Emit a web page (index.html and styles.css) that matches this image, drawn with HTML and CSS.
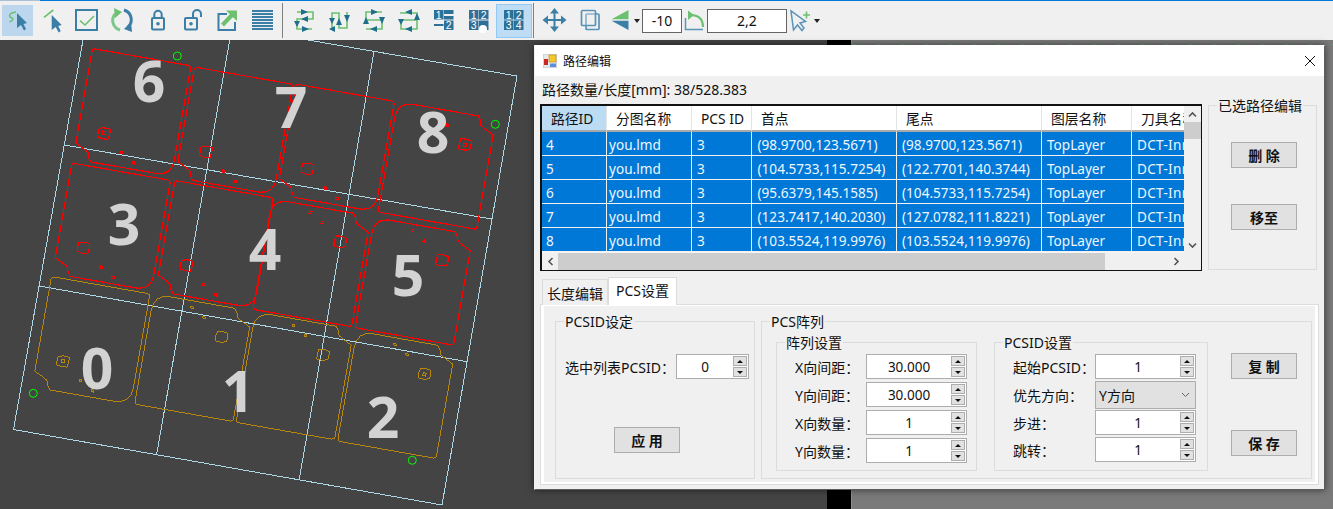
FILE: index.html
```html
<!DOCTYPE html>
<html lang="zh">
<head>
<meta charset="utf-8">
<title>路径编辑</title>
<link rel="stylesheet" href="styles.css">
</head>
<body>
<div class="topline"></div>
<div class="toolbar">
  <div class="tool"><svg class="ico selbg" viewBox="0 0 31 31"><path class="gl" d="M14,7Q6,8 8,12Q14,14 7.5,17"/><polygon class="bf" points="15,8 15,23 19,20 22,25.5 24,24 21.5,19 25,18"/></svg></div>
  <div class="tool"><svg class="ico" viewBox="0 0 31 31"><path class="gt" d="M7,12.3L16.3,5"/><polygon class="bf" points="14.7,10 14.7,25 18.7,22 21.7,27.5 23.7,26 21.2,21 24.7,20"/></svg></div>
  <div class="tool"><svg class="ico" viewBox="0 0 31 31"><rect class="bl" x="4" y="5" width="21" height="20"/><path class="gt" d="M8,15.7L13,20L22,11"/></svg></div>
  <div class="tool"><svg class="ico" viewBox="0 0 31 31"><path class="gk" d="M13,25A10,10 0 0 1 8,9"/><polygon class="gf" points="7,3 15,7 8,13"/><path class="bk" d="M17,5A10,10 0 0 1 21,22"/><polygon class="bf" points="25,27 17,24 24,17"/></svg></div>
  <div class="tool"><svg class="ico" viewBox="0 0 31 31"><rect class="bl" x="10" y="13" width="12" height="11.5" rx="1"/><circle class="bf" cx="16" cy="18.7" r="1.8"/><path class="bl" d="M12.3,13V9.5a3.7,3.7 0 0 1 7.4,0V13"/></svg></div>
  <div class="tool"><svg class="ico" viewBox="0 0 31 31"><rect class="bl" x="8" y="13" width="12" height="11.5" rx="1"/><circle class="bf" cx="14" cy="18.7" r="1.8"/><path class="bl" d="M16,13V9a4,4 0 0 1 8,0V12"/></svg></div>
  <div class="tool"><svg class="ico" viewBox="0 0 31 31"><path class="bl" d="M15,9H6.500V25H23V17"/><path class="gk2" d="M10.500,20L20,10"/><polygon class="gf" points="14,5.500 25,5.500 25,16"/></svg></div>
  <div class="tool"><svg class="ico" viewBox="0 0 31 31"><path class="bstack" d="M5,6H26M5,9H26M5,12H26M5,15H26M5,18H26M5,21H26M5,24H26"/></svg></div>
  <div class="sep"></div>
  <div class="tool"><svg class="ico" viewBox="0 0 31 31"><path class="gt" d="M9,7H25V14H9V24H24"/><polygon class="tf" points="13,4 20,7 13,10"/><polygon class="tf" points="20,11 13,14 20,17"/><polygon class="tf" points="6,16 12,16 9,22"/><polygon class="tf" points="14,21 21,24 14,27"/></svg></div>
  <div class="tool"><svg class="ico" viewBox="0 0 31 31"><path class="gt" d="M9,24V8H16V23H24V7"/><polygon class="tf" points="6,13 12,13 9,19"/><polygon class="tf" points="13,20 19,20 16,13"/><polygon class="tf" points="21,10 27,10 24,17"/><polygon class="tf" points="6,24 12,21 12,27"/></svg></div>
  <div class="tool"><svg class="ico" viewBox="0 0 31 31"><path class="gt" d="M24,7H8V15H24V24H8"/><polygon class="tf" points="13,4 20,7 13,10"/><polygon class="tf" points="5,19 11,19 8,12"/><polygon class="tf" points="21,12 27,12 24,19"/><polygon class="tf" points="19,21 12,24 19,27"/></svg></div>
  <div class="tool"><svg class="ico" viewBox="0 0 31 31"><path class="gt" d="M7,8H24V24H8V15H24"/><polygon class="tf" points="19,4 12,7 19,10"/><polygon class="tf" points="21,15 27,15 24,8"/><polygon class="tf" points="5,14 11,14 8,20"/><polygon class="tf" points="19,21 12,24 19,27"/></svg></div>
  <div class="tool"><svg class="ico" viewBox="0 0 31 31"><rect class="nb" x="6" y="5" width="9.500" height="9.500"/><text class="nt" x="10.700" y="13.500">1</text><rect class="nb" x="16" y="5" width="9.500" height="4"/><rect class="nb" x="16" y="11" width="9.500" height="3.500"/><rect class="nb" x="16" y="15.500" width="9.500" height="9.500"/><text class="nt" x="20.700" y="24">2</text><rect class="nb" x="6" y="19" width="9.500" height="2"/></svg></div>
  <div class="tool"><svg class="ico" viewBox="0 0 31 31"><rect class="nb" x="6" y="5" width="9.500" height="9.500"/><text class="nt" x="10.700" y="13.500">1</text><rect class="nb" x="16" y="5" width="9.500" height="9.500"/><text class="nt" x="20.700" y="13.500">2</text><rect class="nb" x="6" y="15.500" width="9.500" height="9.500"/><text class="nt" x="10.700" y="24">3</text><rect class="nb" x="16" y="15.500" width="9.500" height="9.500"/><circle class="wf" cx="20" cy="24" r="4"/></svg></div>
  <div class="tool active"><svg class="ico" viewBox="0 0 31 31"><rect class="nb" x="6" y="5" width="9.500" height="9.500"/><text class="nt" x="10.700" y="13.500">1</text><rect class="nb" x="16" y="5" width="9.500" height="9.500"/><text class="nt" x="20.700" y="13.500">2</text><rect class="nb" x="6" y="15.500" width="9.500" height="9.500"/><text class="nt" x="10.700" y="24">3</text><rect class="nb" x="16" y="15.500" width="9.500" height="9.500"/><text class="nt" x="20.700" y="24">4</text></svg></div>
  <div class="sep sep-b"></div>
  <div class="tool"><svg class="ico" viewBox="0 0 31 31"><path class="bl" d="M5,15H26M15.500,5V25"/><polygon class="bf" points="15.500,3 20,8.500 11,8.500"/><polygon class="bf" points="15.500,27 20,21.500 11,21.500"/><polygon class="bf" points="3.500,15 9,10.500 9,19.500"/><polygon class="bf" points="27.500,15 22,10.500 22,19.500"/></svg></div>
  <div class="tool"><svg class="ico" viewBox="0 0 31 31"><rect class="lb" x="12" y="9" width="13" height="15.500" rx="1"/><rect class="lb" x="7.500" y="5.500" width="14" height="15" rx="1"/></svg></div>
  <div class="tool tool-tri"><svg class="ico-tri" viewBox="0 0 27 31"><polygon class="gf" points="4.500,14.300 21.500,5 21.500,14.300"/><polygon class="bf" points="4.500,15.700 21.500,15.700 21.500,25"/></svg></div>
  <div class="drop drop-a"></div>
  <div class="tbinput w40">-10</div>
  <div class="tool tool-undo"><svg class="ico-undo" viewBox="0 0 25 31"><path class="lb0" d="M3.500,13V24.500H21"/><path class="gt2" d="M21,22C21,13 16,10 8,10"/><polygon class="gf" points="6,5.500 6,15 12,10"/></svg></div>
  <div class="tbinput w80">2,2</div>
  <div class="tool tool-cur"><svg class="ico-cur" viewBox="0 0 24 31"><polygon class="lb0" points="4,6 6.500,25 10.500,20 15,25.500 17,23 13,18 18.500,16.500"/><path class="gt" d="M16,10H23M19.500,6.500V13.500"/></svg></div>
  <div class="drop"></div>
</div>

<div class="workspace">
  <svg class="canvas" viewBox="0 40 827 469" aria-label="PCS layout">
    <defs>
      <g id="shape">
        <path d="M0,3Q0,0 3,0H97Q100,0 100,3V95Q100,112 83,112H18L15,108L13.500,103L8,100L0,96Z"/>
        <path d="M20.500,77.500Q26,75 31.500,76.500Q32.500,81 31,86.500Q26,88 20.500,86Q19.500,81 20.500,77.500Z"/>
        <rect x="45.500" y="96.500" width="2.500" height="2"/>
        <rect x="59" y="104.500" width="2.500" height="2"/>
      </g>
      <g id="mark"><rect x="24.500" y="79.500" width="3" height="3"/></g>
    </defs>
    <g class="grid">
      <path d="M308,40L517,76L442,505L13.500,429.500L83,40"/>
      <path d="M229.700,40L156.700,454M374,51.700L299.300,479"/>
      <path d="M64.300,145L491.700,219M39.300,286L467.300,361.700"/>
    </g>
    <g class="red">
      <use href="#shape" transform="translate(92.500,48.500) rotate(10)"/>
      <use href="#mark" transform="translate(92.500,48.500) rotate(10)"/>
      <use href="#shape" transform="translate(194.500,67) rotate(10)"/>
      <use href="#shape" transform="translate(296,84) rotate(10)"/>
      <use href="#shape" transform="translate(397.500,101.700) rotate(10) rotate(180 50 56)"/>
      <use href="#mark" transform="translate(397.500,101.700) rotate(10) rotate(180 50 56)"/>
      <use href="#shape" transform="translate(72,163) rotate(10)"/>
      <use href="#shape" transform="translate(175,180.500) rotate(10)"/>
      <use href="#shape" transform="translate(272.500,199) rotate(10) rotate(180 50 56)"/>
      <use href="#shape" transform="translate(374.500,217.500) rotate(10) rotate(180 50 56)"/>
    </g>
    <g class="amber">
      <use href="#shape" transform="translate(51.500,276.500) rotate(10)"/>
      <use href="#mark" transform="translate(51.500,276.500) rotate(10)"/>
      <use href="#shape" transform="translate(154,294) rotate(10) rotate(180 50 56)"/>
      <use href="#shape" transform="translate(255.500,312) rotate(10) rotate(180 50 56)"/>
      <use href="#shape" transform="translate(357,331) rotate(10) rotate(180 50 56)"/>
      <use href="#mark" transform="translate(357,331) rotate(10) rotate(180 50 56)"/>
    </g>
    <g class="fid">
      <circle cx="177.300" cy="56" r="4"/>
      <circle cx="495.300" cy="124.300" r="4"/>
      <circle cx="33.300" cy="393.300" r="4"/>
      <circle cx="412.300" cy="460.300" r="4"/>
    </g>
    <g class="nums">
      <text x="149" y="101.700">6</text>
      <text x="291" y="127.500">7</text>
      <text x="433" y="153">8</text>
      <text x="124" y="245">3</text>
      <text x="265" y="270">4</text>
      <text x="408" y="296">5</text>
      <text x="97" y="389">0</text>
      <text x="238" y="412">1</text>
      <text x="383" y="437.700">2</text>
    </g>
  </svg>
  <div class="band"></div>
  <div class="side"><div class="traces"></div></div>
</div>

<div class="dialog">
  <div class="titlebar">
    <svg class="appicon" viewBox="0 0 14 14"><rect x="0" y="0" width="14" height="14" fill="#e8e8e8" stroke="#a8a8a8" stroke-width=".6"/><rect x="6" y="1" width="7" height="7" fill="#f6c62e" stroke="#b88a10" stroke-width=".6"/><rect x="1" y="5" width="4" height="6" fill="#c62a20"/><rect x="7" y="9.500" width="6" height="3.500" fill="#5a90e0"/></svg>
    <span class="title">路径编辑</span>
    <svg class="close" viewBox="0 0 10 10"><path d="M0,0L10,10M10,0L0,10"/></svg>
  </div>
  <div class="body">
    <div class="count">路径数量/长度[mm]: 38/528.383</div>
    <div class="top-row">
      <div class="gridframe">
        <div class="tablewrap">
          <table class="paths">
            <colgroup><col class="c1"><col class="c2"><col class="c3"><col class="c4"><col class="c5"><col class="c6"><col class="c7"></colgroup>
            <thead><tr><th class="hot">路径ID</th><th>分图名称</th><th>PCS ID</th><th>首点</th><th>尾点</th><th>图层名称</th><th>刀具名称</th></tr></thead>
            <tbody>
              <tr><td class="first">4</td><td class="second">you.lmd</td><td>3</td><td class="pt4">(98.9700,123.5671)</td><td>(98.9700,123.5671)</td><td>TopLayer</td><td class="tool-name">DCT-Inner</td></tr>
              <tr><td class="first">5</td><td class="second">you.lmd</td><td>3</td><td class="pt4">(104.5733,115.7254)</td><td>(122.7701,140.3744)</td><td>TopLayer</td><td class="tool-name">DCT-Inner</td></tr>
              <tr><td class="first">6</td><td class="second">you.lmd</td><td>3</td><td class="pt4">(95.6379,145.1585)</td><td>(104.5733,115.7254)</td><td>TopLayer</td><td class="tool-name">DCT-Inner</td></tr>
              <tr><td class="first">7</td><td class="second">you.lmd</td><td>3</td><td class="pt4">(123.7417,140.2030)</td><td>(127.0782,111.8221)</td><td>TopLayer</td><td class="tool-name">DCT-Inner</td></tr>
              <tr><td class="first">8</td><td class="second">you.lmd</td><td>3</td><td class="pt4">(103.5524,119.9976)</td><td>(103.5524,119.9976)</td><td>TopLayer</td><td class="tool-name">DCT-Inner</td></tr>
            </tbody>
          </table>
        </div>
        <div class="vbar">
          <div class="sb-btn"><svg viewBox="0 0 9 6"><path d="M1,5L4.500,1.500L8,5"/></svg></div>
          <div class="vthumb"></div>
          <div class="sb-fill"></div>
          <div class="sb-btn"><svg viewBox="0 0 9 6"><path d="M1,1L4.500,4.500L8,1"/></svg></div>
        </div>
        <div class="hbar">
          <div class="sb-btn"><svg viewBox="0 0 6 9"><path d="M5,1L1.500,4.500L5,8"/></svg></div>
          <div class="hthumb"></div>
          <div class="sb-fill"></div>
          <div class="sb-btn"><svg viewBox="0 0 6 9"><path d="M1,1L4.500,4.500L1,8"/></svg></div>
        </div>
        <div class="corner"></div>
      </div>
      <div class="group side-group">
        <div class="legend">已选路径编辑</div>
        <div class="btn side-btn">删 除</div>
        <div class="btn side-btn gap36">移至</div>
      </div>
    </div>
    <div class="tabs">
      <div class="tab">长度编辑</div>
      <div class="tab on">PCS设置</div>
    </div>
    <div class="tabpanel">
      <div class="panel-inner">
        <div class="group g-set">
          <div class="legend">PCSID设定</div>
          <div class="set-row"><span class="set-label">选中列表PCSID：</span>
            <div class="spin s73"><span class="val">0</span><span class="arrows"><i class="up"></i><i class="down"></i></span></div>
          </div>
          <div class="btn apply">应 用</div>
        </div>
        <div class="group g-arr">
          <div class="legend">PCS阵列</div>
          <div class="arr-row">
            <div class="group sub sub-a">
              <div class="legend">阵列设置</div>
              <div class="form form-a">
                <span>X向间距：</span><div class="spin"><span class="val">30.000</span><span class="arrows"><i class="up"></i><i class="down"></i></span></div>
                <span>Y向间距：</span><div class="spin"><span class="val">30.000</span><span class="arrows"><i class="up"></i><i class="down"></i></span></div>
                <span>X向数量：</span><div class="spin"><span class="val">1</span><span class="arrows"><i class="up"></i><i class="down"></i></span></div>
                <span>Y向数量：</span><div class="spin"><span class="val">1</span><span class="arrows"><i class="up"></i><i class="down"></i></span></div>
              </div>
            </div>
            <div class="group sub sub-b">
              <div class="legend">PCSID设置</div>
              <div class="form form-b">
                <span>起始PCSID：</span><div class="spin"><span class="val">1</span><span class="arrows"><i class="up"></i><i class="down"></i></span></div>
                <span>优先方向：</span><div class="select"><span>Y方向</span><svg viewBox="0 0 9 6"><path d="M1,1L4.500,4.500L8,1"/></svg></div>
                <span>步进：</span><div class="spin"><span class="val">1</span><span class="arrows"><i class="up"></i><i class="down"></i></span></div>
                <span>跳转：</span><div class="spin"><span class="val">1</span><span class="arrows"><i class="up"></i><i class="down"></i></span></div>
              </div>
            </div>
            <div class="action-col">
              <div class="btn">复 制</div>
              <div class="btn">保 存</div>
            </div>
          </div>
        </div>
      </div>
    </div>
  </div>
</div>
</body>
</html>
```

FILE: styles.css
```css
* { box-sizing: border-box; }
html, body { margin: 0; padding: 0; }
body {
  width: 1333px;
  height: 509px;
  overflow: hidden;
  position: relative;
  background: #444;
  font-family: "Noto Sans", "Noto Sans CJK SC", sans-serif;
  font-size: 14px;
  color: #111;
}

/* toolbar */
.topline { height: 1px; background: linear-gradient(to right, #a9bfd6 0 40px, #0078d7 40px); }
.toolbar { height: 39px; background: #f0f0f0; display: flex; align-items: center; }
.tool { width: 35px; height: 34px; flex: none; display: flex; align-items: center; justify-content: center; }
.ico { width: 31px; height: 31px; flex: none; }
.selbg { background: #bcd6ee; }
.tool.active { width: 36.5px; background: #bfdcf5; border: 1px solid #90c8f6; }
.sep { width: 1px; height: 35px; background: #808080; margin: 0 2.5px 0 2px; flex: none; }
.sep-b { margin-left: 1px; }
.tool-tri { width: 27px; }
.ico-tri { width: 27px; height: 31px; flex: none; }
.tool-undo { width: 25px; }
.ico-undo { width: 25px; height: 31px; flex: none; }
.tool-cur { width: 24px; }
.ico-cur { width: 24px; height: 31px; flex: none; }
.drop { width: 0; height: 0; border-left: 3.5px solid transparent; border-right: 3.5px solid transparent; border-top: 4px solid #222; margin: 0 3px; flex: none; }
.drop-a { margin: 0 2.5px 0 0; }
.tbinput {
  height: 24px; background: #fff; border: 1px solid #646464; flex: none;
  display: flex; align-items: center; justify-content: center; font-size: 14px; color: #111;
}
.w40 { width: 40px; }
.w80 { width: 80px; }

/* toolbar icon paints */
.gl, .gt { fill: none; stroke: #6cc070; stroke-width: 1.6; }
.gt2 { fill: none; stroke: #6cc070; stroke-width: 2.2; }
.gk { fill: none; stroke: #7cc88a; stroke-width: 3; }
.gk2 { fill: none; stroke: #6cc070; stroke-width: 4; }
.gf { fill: #6cc070; }
.bf { fill: #3b7ea6; }
.bl { fill: none; stroke: #3b7ea6; stroke-width: 2; }
.bk { fill: none; stroke: #3b7ea6; stroke-width: 3; }
.bstack { fill: none; stroke: #3b7ea6; stroke-width: 1.8; }
.tf { fill: #1d6f8c; }
.lb { fill: #f0f0f0; fill-opacity: .35; stroke: #5a93b8; stroke-width: 1.7; }
.lb0 { fill: none; stroke: #5a93b8; stroke-width: 1.5; }
.nb { fill: #2e7198; }
.nt { fill: #fff; font-family: "Liberation Sans", sans-serif; font-size: 10.5px; text-anchor: middle; }
.wf { fill: #fff; }

/* workspace */
.workspace { height: 469px; display: flex; }
.canvas { width: 827px; height: 469px; flex: none; background: #444; display: block; }
.band { width: 24px; background: #000; flex: none; }
.side { flex: 1; background: #7a7a7a; border-left: 1px solid #c8862a; }
.traces { height: 1px; margin-top: 4px; background: repeating-linear-gradient(to right, #6f9a6f 0 5px, transparent 5px 24px); }

.grid path { fill: none; stroke: #add8e6; stroke-width: 1; shape-rendering: crispEdges; }
.red { fill: none; stroke: #f00; stroke-width: 1.2; shape-rendering: crispEdges; }
.amber { fill: none; stroke: #b8860b; stroke-width: 1; shape-rendering: crispEdges; }
.fid circle { fill: none; stroke: #0f0; stroke-width: 1; }
.nums text { fill: #d3d3d3; font-family: "Open Sans", sans-serif; font-weight: 700; font-size: 57px; text-anchor: middle; }

/* dialog window */
.dialog {
  position: absolute; left: 534px; top: 45px; width: 791px; height: 445px;
  border: 1px solid #5c5c5c; border-top-color: #fff; border-left-color: #f0f0f0; background: #f0f0f0;
  box-shadow: 0 0 7px rgba(0,0,0,.55);
  display: flex; flex-direction: column;
}
.titlebar { height: 30px; flex: none; background: #fff; display: flex; align-items: center; padding: 0 9px 0 8px; }
.appicon { width: 14px; height: 14px; flex: none; margin-right: 6px; }
.title { font-size: 12px; flex: 1; }
.close { width: 10px; height: 10px; flex: none; }
.close path { fill: none; stroke: #111; stroke-width: 1; }
.body { flex: 1; }
.count { height: 28px; padding-left: 7px; line-height: 28px; white-space: nowrap; }
.top-row { display: flex; padding-left: 5px; }

/* data grid */
.gridframe {
  width: 662px; height: 167px; flex: none; background: #f0f0f0;
  border-style: solid; border-color: #111; border-width: 2px 1px 1px 2px;
  display: grid; grid-template-columns: 642px 17px; grid-template-rows: 147px 17px;
}
.tablewrap { overflow: hidden; background: #f6f6f6; }
.paths { border-collapse: separate; border-spacing: 0; table-layout: fixed; width: 720px; font-size: 13.6px; }
.c1 { width: 65px; } .c2 { width: 85px; } .c3 { width: 60px; } .c4 { width: 145px; } .c5 { width: 145px; } .c6 { width: 90px; } .c7 { width: 130px; }
.paths th {
  height: 26px; padding: 0 0 0 9px; text-align: left; font-weight: 400; font-size: 13.8px; background: #fff; white-space: nowrap;
  border-right: 1px solid #e4e4e4; border-bottom: 2px solid #a9a9a9;
}
.paths th.hot { background: #bcdcf4; }
.paths td {
  height: 24px; padding: 2px 0 0 5px; background: #0078d7; color: #eef6fd; white-space: nowrap; overflow: hidden;
  border-right: 1px solid #f2f2f2; border-bottom: 1px solid #f2f2f2;
}
.paths td.first { padding-left: 4px; }
.paths td.second { padding-left: 2px; }
.paths td.pt4 { padding-left: 5.5px; }
.paths td.tool-name { letter-spacing: .3px; }
.vbar { display: flex; flex-direction: column; background: #f0f0f0; }
.hbar { display: flex; background: #f0f0f0; }
.sb-btn { width: 16px; height: 16px; flex: none; display: flex; align-items: center; justify-content: center; }
.vbar .sb-btn { width: 17px; }
.hbar .sb-btn { height: 17px; }
.sb-btn svg { width: 9px; height: 9px; }
.sb-btn path { fill: none; stroke: #555; stroke-width: 1.6; }
.sb-fill { flex: 1; }
.vthumb { height: 17px; flex: none; background: #cdcdcd; }
.hthumb { width: 547px; flex: none; background: #cdcdcd; }
.corner { background: #f0f0f0; }

/* groups */
.group { border: 1px solid #dcdcdc; }
.legend { width: fit-content; height: 18px; margin: -9px 0 0 8px; padding: 0 1px; background: #f0f0f0; line-height: 18px; white-space: nowrap; }
.side-group { width: 109px; height: 165px; margin: 1px 0 0 6px; flex: none; }
.btn {
  width: 66px; height: 26px; background: #e1e1e1; border: 1px solid #adadad; flex: none;
  display: flex; align-items: center; justify-content: center; font-weight: 700; font-size: 14px; white-space: pre;
}
.side-btn { margin: 27px 0 0 22px; }
.side-btn.gap36 { margin-top: 36px; }

/* tabs */
.tabs { display: flex; align-items: flex-end; height: 28px; margin: 6px 0 -1px 7px; position: relative; z-index: 1; }
.tab { width: 66px; height: 26px; border: 1px solid #dcdcdc; border-bottom: 0; background: #f0f0f0; display: flex; align-items: center; justify-content: center; white-space: nowrap; }
.tab.on { width: 69px; height: 28px; background: #fff; padding-bottom: 3px; }
.tabpanel { width: 779px; height: 181px; margin-left: 5px; border: 1px solid #dcdcdc; background: #fff; padding: 1px 3px 2px 3px; }
.panel-inner { height: 100%; background: #f0f0f0; display: flex; padding: 15px 0 0 11px; }

.g-set { width: 200px; height: 158px; margin-right: 6px; flex: none; }
.set-row { display: flex; align-items: center; margin: 23px 0 0 9px; }
.set-label { width: 111px; white-space: nowrap; flex: none; }
.apply { margin: 48px 0 0 58px; }
.g-arr { width: 551px; height: 158px; flex: none; }
.arr-row { display: flex; margin: 11px 0 0 14px; }
.sub { height: 129px; flex: none; }
.sub-a { width: 201px; margin-right: 17px; }
.sub-b { width: 214px; margin-right: 23px; }
.form { display: grid; row-gap: 3px; align-items: center; padding: 2px 0 0 18px; white-space: nowrap; }
.form-a { grid-template-columns: 71px 101px; }
.form-b { grid-template-columns: 82px 101px; row-gap: 2px; }
.action-col { display: flex; flex-direction: column; gap: 51px; margin-top: 11px; flex: none; }

.spin { height: 25px; background: #fff; border: 1px solid #adadad; display: flex; align-items: center; padding-right: 1px; }
.s73 { width: 73px; flex: none; }
.val { flex: 1; text-align: center; font-size: 13.5px; }
.arrows { width: 14px; display: flex; flex-direction: column; gap: 1px; flex: none; }
.arrows i { height: 10px; background: #e1e1e1; border: 1px solid #adadad; display: flex; align-items: center; justify-content: center; }
.arrows i::after { content: ""; border-left: 3px solid transparent; border-right: 3px solid transparent; }
.arrows .up::after { border-bottom: 3px solid #111; }
.arrows .down::after { border-top: 3px solid #111; }
.select { height: 28px; margin-bottom: -1px; background: #e1e1e1; border: 1px solid #adadad; display: flex; align-items: center; justify-content: space-between; padding: 0 5px 0 3px; }
.select svg { width: 9px; height: 6px; }
.select path { fill: none; stroke: #666; stroke-width: 1; }
```
